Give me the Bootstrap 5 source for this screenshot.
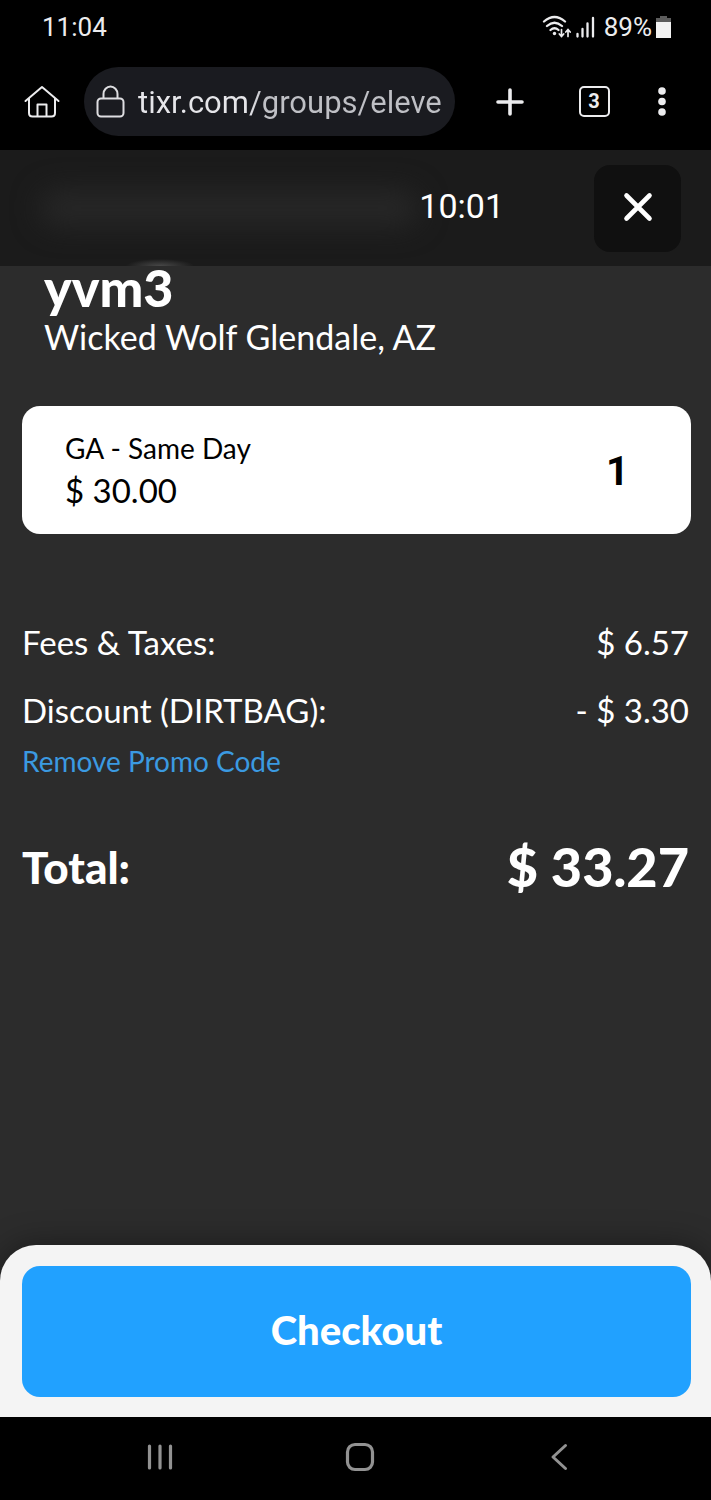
<!DOCTYPE html>
<html lang="en">
<head>
<meta charset="utf-8">
<meta name="viewport" content="width=device-width, initial-scale=1">
<title>Checkout</title>
<link href="https://cdn.jsdelivr.net/npm/bootstrap@5.3.0/dist/css/bootstrap.min.css" rel="stylesheet">
<style>
  body { background: #2c2c2c; color: #fff; font-family: Lato, "Open Sans", sans-serif; }
  svg { display: block; flex: none; }
  .btn { --bs-btn-padding-x: 0; --bs-btn-padding-y: 0; --bs-btn-border-width: 0; }
  .device { background: #000; color: #ececee; font-family: Roboto, sans-serif; }
  .status { height: 54px; padding: 0 40px 0 42px; font-size: 26px; }
  .toolbar { height: 96px; padding: 0 10px 1px 24px; }
  .toolbar .btn { flex: none; }
  .home-btn { margin-right: 24px; }
  .omnibox { height: 69px; min-width: 0; border-radius: 35px; background: #1a1b20; padding: 0 13px 0 12px; gap: 13px; }
  .omnibox input {
    min-width: 0; border: 0; padding: 2px 0 0; outline: 0; font-size: 31px; line-height: 40px; color: #e6e6ea;
    background: linear-gradient(90deg, #e6e6ea 110px, #bfc0c5 126px);
    -webkit-background-clip: text; background-clip: text; -webkit-text-fill-color: transparent;
  }
  .tool-add { width: 110px; }
  .tool-tabs { width: 58px; }
  .tool-menu { width: 78px; }
  .tab-count { width: 31px; height: 31px; border: 2px solid #ececee; border-radius: 5px; font-size: 20px; line-height: 26px; font-weight: 700; }
  .sale-bar {
    height: 116px; padding: 0 30px 0 40px; background-color: #1b1b1b;
    background-image: radial-gradient(ellipse 34px 7px at 160px 116px, #484848, transparent);
  }
  .sale-haze { height: 36px; border-radius: 18px; background: #272727; filter: blur(14px); }
  .timer { font-family: Roboto, sans-serif; font-size: 34px; padding-bottom: 4px; margin-right: 90px; z-index: 1; }
  .close-btn { width: 87px; height: 87px; padding-bottom: 3px; border-radius: 16px; --bs-btn-bg: #101010; --bs-btn-hover-bg: #000; }
  .event { padding-left: 44px; margin-bottom: 45px; }
  .event h1 { font-size: 52px; line-height: 42px; font-weight: 900; margin-bottom: 5px; }
  .text-line { font-size: 33px; line-height: 48px; }
  .event .text-line { font-size: 34px; }
  .order { padding: 0 20px 56px 22px; }
  .amount { padding-right: 2px; }
  .ticket { padding: 22px 62px 22px 43px; border-radius: 18px; background: #fff; color: #000; margin-bottom: 84px; }
  .ticket-name { font-size: 28px; line-height: 40px; }
  .ticket-price { font-size: 33px; line-height: 44px; }
  .ticket-qty { font-family: Roboto, sans-serif; font-size: 40px; font-weight: 700; padding-top: 4px; }
  .promo-link { font-size: 28px; line-height: 40px; color: #3b9ae1; margin-top: 7px; }
  .total-row { margin-top: 54px; line-height: 64px; font-weight: 900; }
  .total-label { font-size: 44px; }
  .total-sum { font-size: 54px; }
  .pay-panel { padding: 21px 20px 20px 22px; background: #f4f4f4; border-radius: 36px 36px 0 0; box-shadow: 0 0 32px rgba(0, 0, 0, .4); }
  .pay-btn { height: 131px; padding-bottom: 4px; border-radius: 18px; font-size: 40px; font-weight: 900;
    --bs-btn-color: #fff; --bs-btn-bg: #21a1ff; --bs-btn-hover-color: #fff; --bs-btn-hover-bg: #0d8fee; }
  .sys-nav { height: 83px; padding: 0 52px 3px 60px; }
</style>
</head>
<body class="d-flex flex-column min-vh-100">

<header class="device">
  <div class="status d-flex align-items-center justify-content-between">
    <span>11:04</span>
    <div class="d-flex align-items-center">
      <svg width="54" height="24" viewBox="0 0 54 24" fill="none" stroke="#ececee" stroke-width="2.300" stroke-linecap="round">
        <path d="M2 6.500Q12.500-2.500 23 6.500M5 11Q12.500 4.500 20 11M8.500 15Q12.500 11.500 16.500 15"/>
        <circle cx="12.500" cy="18.500" r="1.700" fill="#ececee" stroke="none"/>
        <path d="M19.500 14.500v7M17.300 19l2.200 2.500 2.200-2.500M26 21.500v-7M23.800 17l2.200-2.500 2.200 2.500" stroke-width="1.700"/>
        <path d="M35.500 19v2.500M40.500 14v7.500M45.500 8.500v13M51 3v18.500" stroke-width="2.300"/>
      </svg>
      <span class="ms-2">89%</span>
      <svg class="ms-1" width="15" height="22" viewBox="0 0 15 22"><path d="M4 0h7v2h4v4H0V2h4z" fill="#5c5c5c"/><path d="M0 6h15v16H0z" fill="#f2f2f2"/></svg>
    </div>
  </div>
  <div class="toolbar d-flex align-items-center">
    <button class="btn home-btn" type="button" aria-label="Home">
      <svg width="36" height="33" viewBox="0 0 36 33" fill="none" stroke="#ececee" stroke-width="2" stroke-linejoin="round" stroke-linecap="round"><path d="M1.500 16 18 2l16.500 14M5 13.500V28q0 3.500 3.500 3.500h19Q31 31.500 31 28V13.500M13.500 31V19.500h9V31"/></svg>
    </button>
    <div class="omnibox d-flex align-items-center flex-fill">
      <svg width="29" height="33" viewBox="0 0 29 33" fill="none" stroke="#dedee1" stroke-width="2"><rect x="1.500" y="13.500" width="26" height="18" rx="3.500"/><path d="M7.500 13.500V9a7 7.500 0 0 1 14 0v4.500"/></svg>
      <input class="flex-fill w-100" type="text" value="tixr.com/groups/eleve" aria-label="Address">
    </div>
    <button class="btn tool-add d-flex justify-content-center" type="button" aria-label="New tab">
      <svg width="28" height="28" viewBox="0 0 28 28" stroke="#ececee" stroke-width="3.600" stroke-linecap="round"><path d="M14 2v24M2 14h24"/></svg>
    </button>
    <button class="btn tool-tabs d-flex justify-content-center text-reset" type="button" aria-label="3 open tabs"><span class="tab-count">3</span></button>
    <button class="btn tool-menu d-flex justify-content-center" type="button" aria-label="Menu">
      <svg width="8" height="29" viewBox="0 0 8 29" fill="#ececee"><circle cx="4" cy="4" r="3.800"/><circle cx="4" cy="14.500" r="3.800"/><circle cx="4" cy="25" r="3.800"/></svg>
    </button>
  </div>
</header>

<div class="sale-bar d-flex align-items-center">
  <div class="sale-haze flex-fill"></div>
  <span class="timer">10:01</span>
  <button class="btn close-btn d-flex align-items-center justify-content-center" type="button" aria-label="Close">
    <svg width="30" height="30" viewBox="0 0 30 30" stroke="#fff" stroke-width="4.600" stroke-linecap="round"><path d="m3.500 3.500 23 23M26.500 3.500l-23 23"/></svg>
  </button>
</div>

<main class="flex-fill">
  <div class="event">
    <h1>yvm3</h1>
    <p class="text-line mb-0">Wicked Wolf Glendale, AZ</p>
  </div>
  <div class="order">
    <section class="ticket d-flex align-items-center justify-content-between">
      <div>
        <div class="ticket-name">GA - Same Day</div>
        <div class="ticket-price">$ 30.00</div>
      </div>
      <div class="ticket-qty">1</div>
    </section>
    <div class="text-line d-flex justify-content-between mb-3 pb-1"><span>Fees &amp; Taxes:</span><span class="amount">$ 6.57</span></div>
    <div class="text-line d-flex justify-content-between"><span>Discount (DIRTBAG):</span><span class="amount">- $ 3.30</span></div>
    <a class="promo-link d-inline-block text-decoration-none" href="#">Remove Promo Code</a>
    <div class="total-row d-flex justify-content-between"><span class="total-label">Total:</span><span class="total-sum amount">$ 33.27</span></div>
  </div>
</main>

<div class="pay-panel">
  <button class="btn pay-btn w-100" type="button">Checkout</button>
</div>

<nav class="device sys-nav d-flex align-items-center" aria-label="System">
  <button class="btn w-100 d-flex justify-content-center" type="button" aria-label="Recent apps">
    <svg width="26" height="28" viewBox="0 0 26 28" stroke="#929292" stroke-width="3.200" stroke-linecap="round"><path d="M2.500 3v22M13 3v22M23.500 3v22"/></svg>
  </button>
  <button class="btn w-100 d-flex justify-content-center" type="button" aria-label="Home screen">
    <svg width="30" height="30" viewBox="0 0 30 30" fill="none" stroke="#929292" stroke-width="3.200"><rect x="2.500" y="2.500" width="25" height="25" rx="7.500"/></svg>
  </button>
  <button class="btn w-100 d-flex justify-content-center" type="button" aria-label="Back">
    <svg width="18" height="28" viewBox="0 0 18 28" fill="none" stroke="#929292" stroke-width="3" stroke-linecap="round" stroke-linejoin="round"><path d="M15.500 2.500 3 14l12.500 11.500"/></svg>
  </button>
</nav>

<script src="https://cdn.jsdelivr.net/npm/bootstrap@5.3.0/dist/js/bootstrap.bundle.min.js"></script>
</body>
</html>
